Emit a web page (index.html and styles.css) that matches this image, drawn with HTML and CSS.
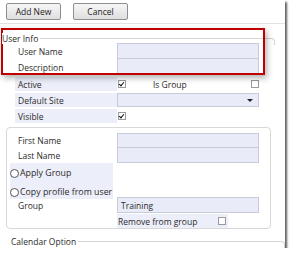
FILE: index.html
```html
<!DOCTYPE html>
<html lang="en">
<head>
  <meta charset="UTF-8">
  <title>User Info</title>
  <link rel="stylesheet" href="styles.css">
</head>
<body>

  <div class="shot">
    <!-- toolbar -->
    <div class="toolbar">
      <button class="btn">Add New</button>
      <button class="btn">Cancel</button>
    </div>

    <div class="panel">
      <div class="legend-line"><span class="legend">User Info</span></div>

      <div class="rows">
        <div class="row r-text">
          <span class="label">User Name</span>
          <span class="input"></span>
        </div>
        <div class="row r-text">
          <span class="label">Description</span>
          <span class="input"></span>
        </div>
        <div class="row r-check">
          <span class="label shade">Active</span>
          <span class="pair">
            <span class="check on"></span>
            <span class="inline-label">Is Group</span>
            <span class="check"></span>
          </span>
        </div>
        <div class="row r-select">
          <span class="label shade">Default Site</span>
          <span class="input select"><span class="arrow"></span></span>
        </div>
        <div class="row r-check">
          <span class="label shade">Visible</span>
          <span><span class="check on"></span></span>
        </div>
      </div>

      <!-- nested box -->
      <div class="subbox">
        <div class="row r-name">
          <span class="label">First Name</span>
          <span class="input"></span>
        </div>
        <div class="row r-name">
          <span class="label">Last Name</span>
          <span class="input"></span>
        </div>
        <div class="radios">
          <div class="radio-row"><span class="radio"></span>Apply Group</div>
          <div class="radio-row"><span class="radio"></span>Copy profile from user</div>
        </div>
        <div class="row r-group">
          <span class="label">Group</span>
          <span class="input">Training</span>
        </div>
        <div class="row r-remove">
          <span></span>
          <span class="remove">Remove from group<span class="check"></span></span>
        </div>
      </div>

      <div class="legend-line cal"><span class="legend">Calendar Option</span></div>
    </div>

    <!-- annotation box -->
    <div class="highlight"></div>
  </div>

</body>
</html>
```

FILE: styles.css
```css
body {
  margin: 0;
  background-color: #fff;
  font-family: "Open Sans", "DejaVu Sans", sans-serif;
  font-size: 8.5px;
  color: #2b2b2b;
}

.shot {
  position: relative;
  width: 285px;
  height: 248px;
  overflow: hidden;
  background-color: #fff;
  box-shadow: 2px 2px 2px rgba(40, 40, 40, 0.75);
}

.toolbar {
  display: flex;
  gap: 12px;
  padding: 3px 0 0 6px;
  height: 20px;
  border-bottom: 1px solid #e2e2e2;
}

.btn {
  width: 55px;
  height: 17px;
  padding: 0;
  font-family: inherit;
  font-size: 8.5px;
  color: #222;
  border: 1px solid #8e8e8e;
  border-radius: 2px;
  background: linear-gradient(#f7f7f7, #dedede);
}

.panel {
  padding: 9px 0 0 0;
}

.legend-line {
  position: relative;
  margin-left: 2px;
  margin-right: 10px;
  height: 10px;
}

.legend-line::after {
  content: "";
  position: absolute;
  left: 0;
  right: 0;
  top: 5px;
  border-top: 1px solid #d4d4d4;
  border-right: 1px solid #d4d4d4;
  border-radius: 0 4px 0 0;
  height: 6px;
}

.legend {
  position: relative;
  z-index: 1;
  background: #fff;
  padding-right: 2px;
  line-height: 10px;
}

.rows {
  padding: 0 0 0 15px;
}

.row {
  display: grid;
  grid-template-columns: 102px 142px;
  align-items: center;
}

.label {
  padding-left: 3px;
  height: 100%;
  display: flex;
  align-items: center;
}

.shade {
  background-color: #eceef9;
}

.input {
  box-sizing: border-box;
  height: 100%;
  background-color: #e9ecf8;
  border: 1px solid #c8ccd9;
  display: flex;
  align-items: center;
  padding-left: 3px;
}

.r-text {
  height: 16px;
}

.r-text + .r-text .input {
  border-top: none;
}

.r-check {
  height: 14px;
  margin-top: 2px;
}

.r-select {
  height: 14px;
  margin-top: 2px;
  margin-bottom: 1px;
}

.select {
  position: relative;
}

.arrow {
  position: absolute;
  right: 5px;
  top: 5px;
  border-left: 3px solid transparent;
  border-right: 3px solid transparent;
  border-top: 3px solid #222;
}

.pair {
  display: flex;
  align-items: center;
}

.inline-label {
  margin-left: 27px;
  width: 99px;
}

.check {
  display: inline-block;
  box-sizing: border-box;
  width: 8px;
  height: 8px;
  margin-left: 1px;
  border: 1px solid #9a9a9a;
  background: #fff;
  position: relative;
}

.check.on::after {
  content: "";
  position: absolute;
  left: 1px;
  top: 0;
  width: 2px;
  height: 4px;
  border-right: 1.5px solid #111;
  border-bottom: 1.5px solid #111;
  transform: rotate(40deg);
}

.subbox {
  margin: 4px 14px 0 6px;
  padding: 5px 0 0 8px;
  height: 95px;
  border: 1px solid #d8d8d8;
  border-radius: 4px;
}

.r-name {
  height: 15px;
}

.r-name + .r-name .input {
  border-top: none;
}

.radios {
  box-sizing: border-box;
  width: 103px;
  margin-left: -5px;
  background-color: #eceef9;
  height: 36px;
  padding-top: 5px;
  display: flex;
  flex-direction: column;
  gap: 8px;
}

.radio-row {
  display: flex;
  align-items: center;
  line-height: 11px;
  font-size: 8.8px;
}

.radio {
  display: inline-block;
  box-sizing: border-box;
  width: 9px;
  height: 9px;
  border: 1px solid #555;
  border-radius: 50%;
  margin-right: 1px;
  background: #fff;
}

.r-group {
  height: 16px;
  margin-top: -2px;
}

.r-remove {
  height: 14px;
  margin-top: 1px;
}

.remove {
  display: flex;
  align-items: center;
  gap: 20px;
  width: 110px;
  padding-left: 1px;
  height: 100%;
  background-color: #eceef9;
}

.cal {
  margin-top: 7px;
  margin-left: 11px;
  margin-right: 0;
}

.highlight {
  position: absolute;
  left: 1px;
  top: 28px;
  width: 260px;
  height: 43px;
  border: 2px solid #c00000;
  box-shadow: 2px 3px 6px rgba(0, 0, 0, 0.3);
}
```
